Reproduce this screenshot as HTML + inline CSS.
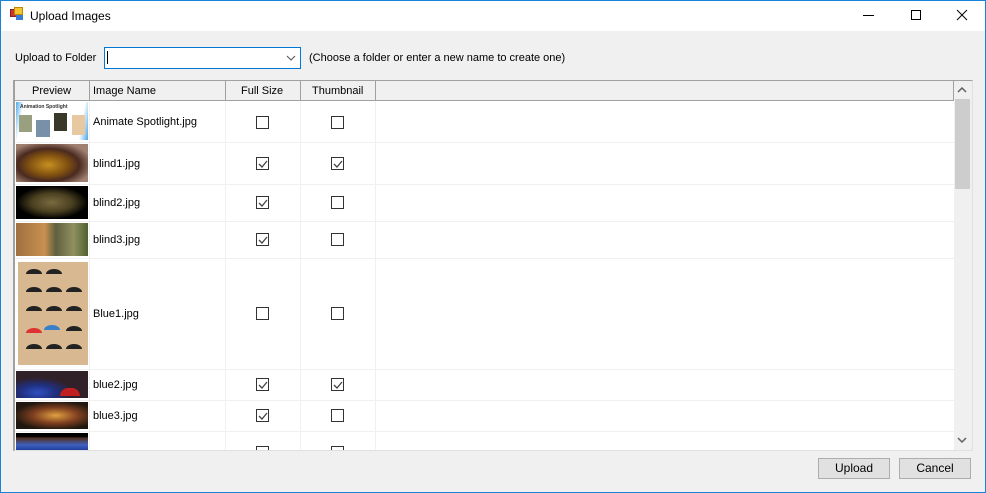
<!DOCTYPE html>
<html><head><style>
*{margin:0;padding:0;box-sizing:border-box}
body{width:986px;height:493px;background:#f0f0f0;font-family:"Liberation Sans",sans-serif;font-size:11px;color:#000;position:relative;overflow:hidden}
.a{position:absolute}
.title{left:0;top:0;width:986px;height:31px;background:#fff}
.cb{width:13px;height:13px;border:1px solid #333;background:#fff}
.cb svg{position:absolute;left:1px;top:1px}
.hl{background:#f0f0f0}
.vl{width:1px;background:#f0f0f0}
.btn{height:21px;width:72px;background:#e1e1e1;border:1px solid #adadad;text-align:center;line-height:19px;font-size:12px}
</style></head><body>
<div class="a title"></div>
<div class="a" style="left:10px;top:9px;width:8px;height:8px;background:#c33;border:1px solid #822"></div>
<div class="a" style="left:14px;top:7px;width:9px;height:8px;background:#f4c430;border:1px solid #b80"></div>
<div class="a" style="left:16px;top:15px;width:7px;height:5px;background:#3a7bd5"></div>
<div class="a" style="left:30px;top:9px;font-size:12px">Upload Images</div>
<svg class="a" style="left:860px;top:8px" width="110" height="16"><path d="M3 7.5H14" stroke="#000"/><rect x="51.5" y="2.5" width="9" height="9" fill="none" stroke="#000"/><path d="M97 2L107 12M107 2L97 12" stroke="#000"/></svg>

<div class="a" style="left:15px;top:52px">Upload to Folder</div>
<div class="a" style="left:104px;top:47px;width:197px;height:22px;background:#fff;border:1px solid #0078d7"></div>
<div class="a" style="left:107px;top:51px;width:1px;height:13px;background:#000"></div>
<svg class="a" style="left:286px;top:55px" width="10" height="6"><path d="M1 1L5 5L9 1" stroke="#555" fill="none"/></svg>
<div class="a" style="left:309px;top:52px">(Choose a folder or enter a new name to create one)</div>

<div class="a" style="left:13px;top:80px;width:960px;height:371px;background:#fff;border-top:1px solid #a0a0a0;border-left:2px solid #a0a0a0;border-bottom:1px solid #e0e0e0;border-right:1px solid #e0e0e0"></div>
<div class="a" style="left:15px;top:81px;width:939px;height:20px;background:#f0f0f0;border-bottom:1px solid #a0a0a0;border-right:1px solid #a0a0a0"></div>
<div class="a" style="left:89px;top:81px;width:1px;height:19px;background:#a0a0a0"></div>
<div class="a" style="left:225px;top:81px;width:1px;height:19px;background:#a0a0a0"></div>
<div class="a" style="left:300px;top:81px;width:1px;height:19px;background:#a0a0a0"></div>
<div class="a" style="left:375px;top:81px;width:1px;height:19px;background:#a0a0a0"></div>
<div class="a" style="left:32px;top:85px">Preview</div>
<div class="a" style="left:93px;top:85px">Image Name</div>
<div class="a" style="left:241px;top:85px">Full Size</div>
<div class="a" style="left:312px;top:85px">Thumbnail</div>

<div class="a vl" style="left:89px;top:101px;height:349px"></div>
<div class="a vl" style="left:225px;top:101px;height:349px"></div>
<div class="a vl" style="left:300px;top:101px;height:349px"></div>
<div class="a vl" style="left:375px;top:101px;height:349px"></div>
<div class="a hl" style="left:15px;top:142px;width:939px;height:1px"></div>
<div class="a hl" style="left:15px;top:184px;width:939px;height:1px"></div>
<div class="a hl" style="left:15px;top:221px;width:939px;height:1px"></div>
<div class="a hl" style="left:15px;top:258px;width:939px;height:1px"></div>
<div class="a hl" style="left:15px;top:369px;width:939px;height:1px"></div>
<div class="a hl" style="left:15px;top:400px;width:939px;height:1px"></div>
<div class="a hl" style="left:15px;top:431px;width:939px;height:1px"></div>

<div class="a" style="left:16px;top:102px;width:72px;height:38px;background:linear-gradient(100deg,#4aa8e8 0,#fff 10%,#fff 88%,#4aa8e8 100%)"></div>
<div class="a" style="left:20px;top:104px;font-size:5px;font-weight:bold;color:#333">Animation Spotlight</div>
<div class="a" style="left:19px;top:115px;width:13px;height:17px;background:#98a080"></div>
<div class="a" style="left:36px;top:120px;width:14px;height:17px;background:#7890a8"></div>
<div class="a" style="left:54px;top:113px;width:13px;height:18px;background:#3a3828"></div>
<div class="a" style="left:72px;top:115px;width:13px;height:20px;background:#e8c8a0"></div>
<div class="a" style="left:16px;top:144px;width:72px;height:38px;background:radial-gradient(ellipse at 45% 55%,#c89020 0,#805010 35%,#4a2a20 55%,#a08070 80%)"></div>
<div class="a" style="left:16px;top:186px;width:72px;height:33px;background:radial-gradient(ellipse at 50% 50%,#7a6a40 0,#4a4020 40%,#000 70%)"></div>
<div class="a" style="left:16px;top:223px;width:72px;height:33px;background:linear-gradient(90deg,#a07040,#c89050 40%,#606040 55%,#909060 80%,#506030)"></div>
<div class="a" style="left:18px;top:262px;width:70px;height:103px;background:#d8b890"></div>
<svg class="a" style="left:18px;top:262px" width="70" height="103">
<g fill="#222"><path d="M8 12a8 5 0 0 1 16 0z"/><path d="M28 12a8 5 0 0 1 16 0z"/><path d="M8 30a8 5 0 0 1 16 0z"/><path d="M28 30a8 5 0 0 1 16 0z"/><path d="M48 30a8 5 0 0 1 16 0z"/><path d="M8 49a8 5 0 0 1 16 0z"/><path d="M28 49a8 5 0 0 1 16 0z"/><path d="M48 49a8 5 0 0 1 16 0z"/><path d="M48 69a8 5 0 0 1 16 0z"/><path d="M8 87a8 5 0 0 1 16 0z"/><path d="M28 87a8 5 0 0 1 16 0z"/><path d="M48 87a8 5 0 0 1 16 0z"/></g>
<path d="M8 71a8 5 0 0 1 16 0z" fill="#d33"/><path d="M26 68a8 5 0 0 1 16 0z" fill="#3a80c8"/></svg>
<div class="a" style="left:16px;top:371px;width:72px;height:27px;background:radial-gradient(ellipse at 30% 80%,#3050c0 0,#203080 25%,#302028 50%),#302028"></div>
<div class="a" style="left:60px;top:388px;width:20px;height:8px;border-radius:10px 10px 0 0;background:#c02020"></div>
<div class="a" style="left:16px;top:402px;width:72px;height:27px;background:radial-gradient(ellipse at 55% 50%,#e0a040 0,#804020 40%,#201810 75%)"></div>
<div class="a" style="left:16px;top:433px;width:72px;height:17px;background:linear-gradient(#000 0,#000 20%,#503020 30%,#4060c0 70%,#2040a0)"></div>

<div class="a" style="left:93px;top:116px">Animate Spotlight.jpg</div>
<div class="a" style="left:93px;top:158px">blind1.jpg</div>
<div class="a" style="left:93px;top:197px">blind2.jpg</div>
<div class="a" style="left:93px;top:234px">blind3.jpg</div>
<div class="a" style="left:93px;top:308px">Blue1.jpg</div>
<div class="a" style="left:93px;top:379px">blue2.jpg</div>
<div class="a" style="left:93px;top:410px">blue3.jpg</div>

<div class="a cb" style="left:256px;top:116px"></div><div class="a cb" style="left:331px;top:116px"></div>
<div class="a cb" style="left:256px;top:157px"><svg width="10" height="10"><path d="M1 5L4 8L9 2" stroke="#444" stroke-width="1.3" fill="none"/></svg></div>
<div class="a cb" style="left:331px;top:157px"><svg width="10" height="10"><path d="M1 5L4 8L9 2" stroke="#444" stroke-width="1.3" fill="none"/></svg></div>
<div class="a cb" style="left:256px;top:196px"><svg width="10" height="10"><path d="M1 5L4 8L9 2" stroke="#444" stroke-width="1.3" fill="none"/></svg></div>
<div class="a cb" style="left:331px;top:196px"></div>
<div class="a cb" style="left:256px;top:233px"><svg width="10" height="10"><path d="M1 5L4 8L9 2" stroke="#444" stroke-width="1.3" fill="none"/></svg></div>
<div class="a cb" style="left:331px;top:233px"></div>
<div class="a cb" style="left:256px;top:307px"></div><div class="a cb" style="left:331px;top:307px"></div>
<div class="a cb" style="left:256px;top:378px"><svg width="10" height="10"><path d="M1 5L4 8L9 2" stroke="#444" stroke-width="1.3" fill="none"/></svg></div>
<div class="a cb" style="left:331px;top:378px"><svg width="10" height="10"><path d="M1 5L4 8L9 2" stroke="#444" stroke-width="1.3" fill="none"/></svg></div>
<div class="a cb" style="left:256px;top:409px"><svg width="10" height="10"><path d="M1 5L4 8L9 2" stroke="#444" stroke-width="1.3" fill="none"/></svg></div>
<div class="a cb" style="left:331px;top:409px"></div>
<div class="a" style="left:256px;top:446px;width:13px;height:4px;border:1px solid #333;border-bottom:0"></div>
<div class="a" style="left:331px;top:446px;width:13px;height:4px;border:1px solid #333;border-bottom:0"></div>

<div class="a" style="left:954px;top:81px;width:18px;height:369px;background:#f0f0f0"></div>
<svg class="a" style="left:957px;top:87px" width="10" height="6"><path d="M1 5L5 1L9 5" stroke="#606060" stroke-width="1.5" fill="none"/></svg>
<div class="a" style="left:955px;top:99px;width:15px;height:90px;background:#cdcdcd"></div>
<svg class="a" style="left:957px;top:437px" width="10" height="6"><path d="M1 1L5 5L9 1" stroke="#606060" stroke-width="1.5" fill="none"/></svg>

<div class="a btn" style="left:818px;top:458px">Upload</div>
<div class="a btn" style="left:899px;top:458px">Cancel</div>
<div class="a" style="left:0;top:0;width:986px;height:493px;border:1px solid #1883d7"></div>
</body></html>
